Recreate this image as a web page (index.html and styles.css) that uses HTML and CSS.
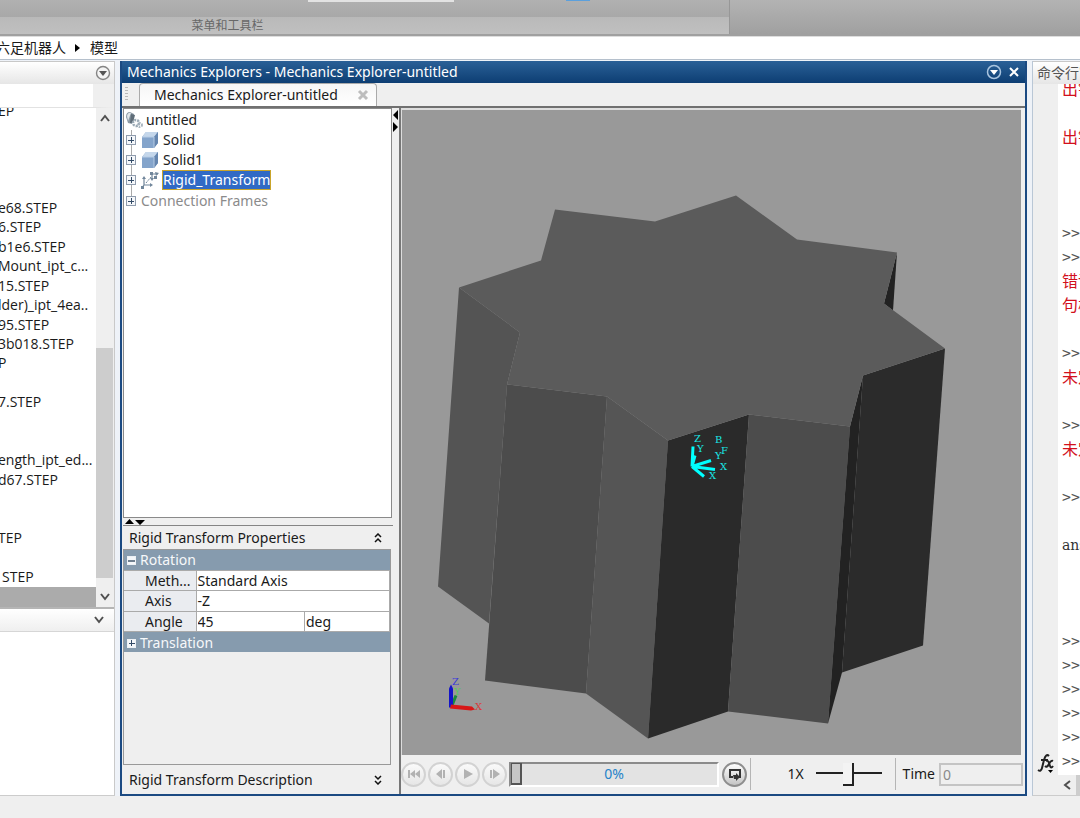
FILE: index.html
```html
<!DOCTYPE html>
<html lang="zh-CN">
<head>
<meta charset="utf-8">
<title>Mechanics Explorers</title>
<link rel="stylesheet" href="styles.css">
</head>
<body>
<div class="app">
  <header class="ribbon">
    <div class="ribbon-group">
      <div class="ribbon-tools"><span class="tool-edge"></span><span class="tool-mark"></span></div>
      <div class="ribbon-label">菜单和工具栏</div>
    </div>
    <div class="ribbon-rest"></div>
  </header>
  <nav class="address">
    <span>六足机器人</span>
    <svg class="crumb" viewBox="0 0 6 10"><path d="M0 1L5 5L0 9Z"/></svg>
    <span>模型</span>
  </nav>

  <div class="workspace">
    <aside class="files">
      <div class="pane-head">
        <button class="round-menu" aria-label="Panel menu"><svg viewBox="0 0 16 16"><circle cx="8" cy="8" r="6.5" fill="#f4f4f4" stroke="#858585" stroke-width="1.4"/><path d="M4 6H12L8 11Z" fill="#555"/></svg></button>
      </div>
      <div class="files-column"></div>
      <div class="files-body">
        <div class="files-clip">
          <ul class="file-list">
            <li>EP</li><li></li><li></li><li></li><li></li>
            <li>e68.STEP</li><li>6.STEP</li><li>b1e6.STEP</li><li>Mount_ipt_c...</li><li>15.STEP</li><li>lder)_ipt_4ea..</li><li>95.STEP</li><li>3b018.STEP</li><li>P</li><li></li><li>7.STEP</li><li></li><li></li><li>ength_ipt_ed...</li><li>d67.STEP</li><li></li><li></li><li>TEP</li><li></li><li class="inset">STEP</li><li class="selected"></li>
          </ul>
        </div>
        <div class="vscroll">
          <button class="arrow" aria-label="Scroll up"><svg viewBox="0 0 10 8"><path d="M1 7L5 2L9 7"/></svg></button>
          <div class="track"><div class="thumb"></div></div>
          <button class="arrow" aria-label="Scroll down"><svg viewBox="0 0 10 8"><path d="M1 1L5 6L9 1"/></svg></button>
        </div>
      </div>
      <div class="detail-head"><button class="arrow" aria-label="Expand details"><svg viewBox="0 0 10 8"><path d="M1 1L5 6L9 1"/></svg></button></div>
      <div class="detail-body"></div>
    </aside>

    <main class="explorer">
      <div class="titlebar">
        <h1>Mechanics Explorers - Mechanics Explorer-untitled</h1>
        <button class="round-menu" aria-label="Window menu"><svg viewBox="0 0 16 16"><circle cx="8" cy="8" r="6.5" fill="none" stroke="#a9c4df" stroke-width="1.500"/><path d="M4 6H12L8 11Z" fill="#fff"/></svg></button>
        <button class="close" aria-label="Close"><svg viewBox="0 0 10 10"><path d="M1 1L9 9M9 1L1 9"/></svg></button>
      </div>
      <div class="tabs">
        <span class="grip"></span>
        <div class="tab"><span>Mechanics Explorer-untitled</span><button class="tab-close" aria-label="Close tab"><svg viewBox="0 0 12 12"><path d="M2 2L10 10M10 2L2 10"/></svg></button></div>
      </div>
      <div class="content">
        <section class="side">
          <ul class="tree">
            <li class="root"><svg class="root-icon" viewBox="0 0 18 18"><path d="M1 6Q1 1 5 1L9 3L7 13L3 12Z" fill="#8b99a5"/><path d="M2 5Q3 1 6 2L3 10Z" fill="#e1e7eb"/><path d="M6 3L10 4L8 12L5 12Z" fill="#5f6d78"/><circle cx="11" cy="12" r="3" fill="none" stroke="#9aa9b5" stroke-width="2.500" stroke-dasharray="2 1"/><circle cx="15" cy="14" r="2" fill="none" stroke="#aab6c0" stroke-width="2" stroke-dasharray="1.500 1"/></svg><span>untitled</span></li>
            <li><i class="box"></i><svg class="node" viewBox="0 0 18 18"><path d="M1 6L5 1H17V12L13 17H1Z" fill="#84a4cb"/><path d="M1 6L5 1H17L13 6Z" fill="#c5d7eb"/><path d="M13 6L17 1V12L13 17Z" fill="#6686af"/><path d="M1 6H13V17" fill="none" stroke="#b7cce5"/></svg><span>Solid</span></li>
            <li><i class="box"></i><svg class="node" viewBox="0 0 18 18"><path d="M1 6L5 1H17V12L13 17H1Z" fill="#84a4cb"/><path d="M1 6L5 1H17L13 6Z" fill="#c5d7eb"/><path d="M13 6L17 1V12L13 17Z" fill="#6686af"/><path d="M1 6H13V17" fill="none" stroke="#b7cce5"/></svg><span>Solid1</span></li>
            <li><i class="box"></i><svg class="node" viewBox="0 0 18 18"><path d="M3 7V14H10M3 14L1 17M11 3V8M11 3H17" fill="none" stroke="#71869b" stroke-width="1.200"/><path d="M1 8L3 5L5 8ZM9 12L12 14L9 16ZM0 15H3V18H0ZM9 1H12V4H9ZM14 1L18 2L15 5ZM9 7H13L11 10ZM13 5H16V8H13Z" fill="#71869b"/><path d="M5 12L10 6" stroke="#71869b" stroke-dasharray="2 1"/></svg><span class="picked">Rigid_Transform</span></li>
            <li class="muted"><i class="box"></i><span>Connection Frames</span></li>
          </ul>
          <div class="hsplit"><svg viewBox="0 0 20 6"><path d="M0 5L4.500 0L9 5ZM10 1H20L15 6Z"/></svg></div>
          <div class="section-head"><h2>Rigid Transform Properties</h2><button aria-label="Collapse properties"><svg viewBox="0 0 8 10"><path d="M1 4L4 1L7 4M1 9L4 6L7 9"/></svg></button></div>
          <div class="props">
            <table>
              <colgroup><col class="c-name"><col class="c-value"><col class="c-unit"></colgroup>
              <tr class="group"><th colspan="3" scope="colgroup"><i class="box minus"></i>Rotation</th></tr>
              <tr><th scope="row">Meth...</th><td colspan="2">Standard Axis</td></tr>
              <tr><th scope="row">Axis</th><td colspan="2">-Z</td></tr>
              <tr><th scope="row">Angle</th><td><input type="text" value="45" aria-label="Angle"></td><td>deg</td></tr>
              <tr class="group"><th colspan="3" scope="colgroup"><i class="box"></i>Translation</th></tr>
            </table>
          </div>
          <div class="section-head last"><h2>Rigid Transform Description</h2><button aria-label="Expand description"><svg viewBox="0 0 8 10"><path d="M1 1L4 4L7 1M1 6L4 9L7 6"/></svg></button></div>
        </section>
        <div class="vsplit"><svg viewBox="0 0 5 22"><path d="M5 0V10L0 5ZM0 12V22L5 17Z"/></svg></div>
        <section class="viewer">
          <div class="stage">
          <svg class="scene" viewBox="402 111 619 644" role="img" aria-label="Star prism">
            <path fill="#222" d="M897 253L884 304L893 311Z"/>
            <path fill="#545454" d="M459 288L520 333L507 385L489 624L438 587Z"/>
            <path fill="#4c4c4c" d="M507 385L607 397L586 694L485 681Z"/>
            <path fill="#555" d="M607 397L668 441L648 739L586 694Z"/>
            <path fill="#2a2a2a" d="M668 441L749 415L728 712L648 739Z"/>
            <path fill="#4c4c4c" d="M749 415L850 427L828 724L728 712Z"/>
            <path fill="#222" d="M850 427L863 376L842 673L828 724Z"/>
            <path fill="#2b2b2b" d="M863 376L945 349L923 646L842 673Z"/>
            <path fill="#5b5b5b" d="M555 210L655 222L736 196L797 240L897 253L884 304L945 349L863 376L850 427L749 415L668 441L607 397L507 385L520 333L459 288L541 261Z"/>
            <path d="M692 467L693 447M692 467L695 456M692 467L711 461M692 467L715 470M692 467L704 477" fill="none" stroke="#0ff" stroke-width="3"/>
            <g class="axis-text" fill="#19e6e6">
              <text x="694" y="442">Z</text><text x="697" y="452">Y</text><text x="715" y="443">B</text><text x="721" y="454">F</text><text x="715" y="459">Y</text><text x="720" y="470">X</text><text x="709" y="479">X</text>
            </g>
            <path d="M452 706L456 696" stroke="#178a3c" stroke-width="3"/>
            <path d="M449 708V689L451 685L453 689V708Z" fill="#1414c8"/>
            <path d="M451 705L472 707L475 710L471 711L450 709Z" fill="#d81616"/>
            <g class="axis-text"><text x="452" y="685" fill="#3c3cd8">Z</text><text x="454" y="695" fill="#5cc85c">Y</text><text x="475" y="710" fill="#d83c3c">X</text></g>
          </svg>
          </div>
          <div class="player">
            <div class="transport">
              <button class="knob" aria-label="Rewind" disabled><svg viewBox="0 0 24 24"><path d="M6 8H8V16H6ZM13 8V16L8 12ZM18 8V16L13 12Z"/></svg></button>
              <button class="knob" aria-label="Step back" disabled><svg viewBox="0 0 24 24"><path d="M13 7V17L7 12ZM14 8H16V16H14Z"/></svg></button>
              <button class="knob" aria-label="Play" disabled><svg viewBox="0 0 24 24"><path d="M8 7V17L17 12Z"/></svg></button>
              <button class="knob" aria-label="Step forward" disabled><svg viewBox="0 0 24 24"><path d="M7 8H9V16H7ZM10 7V17L17 12Z"/></svg></button>
            </div>
            <div class="progress"><input type="range" min="0" max="100" value="0" aria-label="Progress"><output>0%</output></div>
            <button class="knob loop" aria-label="Loop"><svg viewBox="0 0 24 24"><path d="M10 15H7V8H17V15H15" fill="none" stroke="#333" stroke-width="2"/><path d="M10 13H13V11L17 15L13 19V17H11Z"/></svg></button>
            <div class="speed"><label for="speed">1X</label><input id="speed" type="range" min="0" max="100" value="50"></div>
            <div class="time"><label for="time">Time</label><input id="time" type="text" value="0" disabled></div>
          </div>
        </section>
      </div>
    </main>

    <aside class="command">
      <div class="pane-head">命令行窗口</div>
      <div class="console">
        <div class="gutter"><svg viewBox="0 0 18 20"><path d="M12 3Q9 0 7 7L5 15Q4 19 1 17M4 7H11" fill="none" stroke="#222" stroke-width="2"/><path d="M9 8Q11 7 12 10L13 13Q14 16 16 13M16 8Q14 7 12 11Q10 15 8 13" fill="none" stroke="#222" stroke-width="2"/><path d="M11 17H16L13.500 20Z"/></svg></div>
        <div class="lines">
          <p class="err">出错</p><p></p><p class="err">出错</p><p></p><p></p><p></p><p>&gt;&gt;</p><p>&gt;&gt;</p><p class="err">错误</p><p class="err">句柄</p><p></p><p>&gt;&gt;</p><p class="err">未定义</p><p></p><p>&gt;&gt;</p><p class="err">未定义</p><p></p><p>&gt;&gt;</p><p></p><p class="ans">ans =</p><p></p><p></p><p></p><p>&gt;&gt;</p><p>&gt;&gt;</p><p>&gt;&gt;</p><p>&gt;&gt;</p><p>&gt;&gt;</p><p>&gt;&gt;</p>
        </div>
      </div>
      <div class="hscroll"><button class="arrow" aria-label="Scroll left"><svg viewBox="0 0 8 10"><path d="M7 1L2 5L7 9"/></svg></button><div class="hthumb"></div></div>
    </aside>
  </div>
  <footer class="status"></footer>
</div>
</body>
</html>
```
FILE: styles.css
```css
* { box-sizing: border-box; }
body { margin: 0; background: #efefef; color: #1a1a1a; font: 14px/20px "Noto Sans", "Noto Sans CJK SC", sans-serif; }
h1, h2, p, ul { margin: 0; padding: 0; font-size: inherit; font-weight: 400; list-style: none; }
button { display: flex; flex: none; align-items: center; justify-content: center; padding: 0; border: 0; background: none; }
svg { display: block; flex: none; }
.app { display: flex; flex-direction: column; height: 100vh; overflow: hidden; }

.ribbon { display: flex; flex: none; height: 36px; border-bottom: 2px solid #a0a0a0; }
.ribbon-group { display: flex; flex: 0 0 730px; flex-direction: column; border-right: 1px solid #979797; }
.ribbon-tools { display: flex; height: 17px; padding-left: 308px; gap: 112px; background: linear-gradient(#b1b1b1, #a8a8a8); }
.tool-edge { width: 146px; height: 2px; background: #e3e3e3; }
.tool-mark { width: 24px; height: 1px; background: #5ca0dc; }
.ribbon-label { flex: 1; padding-right: 274px; background: linear-gradient(#b9b9b9, #c0c0c0); color: #686868; font-size: 12px; line-height: 17px; text-align: center; }
.ribbon-rest { flex: 1; background: linear-gradient(#b3b3b3, #a0a0a0); }
.address { display: flex; flex: none; align-items: center; gap: 9px; height: 24px; border-top: 1px solid #ddd; border-bottom: 1px solid #b5c0cc; background: #fff; white-space: nowrap; }
.address span:first-child { margin-left: -4px; }
.crumb { width: 6px; height: 10px; }

.workspace { display: flex; flex: 1; gap: 5px; min-height: 0; padding-top: 1px; background: #eef2f8; }
.pane-head { display: flex; flex: none; align-items: center; height: 23px; border-top: 1px solid #c8c8c8; background: linear-gradient(#fff, #e6e6e6); }
.round-menu svg { width: 16px; height: 16px; }
.arrow svg { width: 10px; height: 8px; }
.arrow path { fill: none; stroke: #505050; stroke-width: 2; }

.files { display: flex; flex: 0 0 115px; flex-direction: column; min-width: 0; border-right: 1px solid #c9c9c9; border-bottom: 1px solid #ccc; background: #fff; }
.files .pane-head { justify-content: flex-end; padding-right: 3px; }
.files-column { flex: none; height: 24px; border-right: 21px solid #efefef; border-bottom: 1px solid #e2e2e2; }
.files-body { display: flex; flex: 498 1 0; min-height: 0; }
.files-clip { flex: 1; min-width: 0; overflow: hidden; }
.file-list { display: grid; grid-template-rows: repeat(26, 1fr); height: calc(100% + 6px); margin-top: -6px; font: 14px/18px "Open Sans", sans-serif; white-space: nowrap; }
.file-list li { min-height: 0; text-indent: -2px; }
.file-list .inset { text-indent: 2px; }
.file-list .selected { background: #ababab; }
.vscroll { display: flex; flex: 0 0 18px; flex-direction: column; background: #efefef; }
.vscroll .arrow { height: 20px; }
.track { display: flex; flex: 1; align-items: flex-end; padding-bottom: 9px; }
.thumb { width: 17px; height: 51%; background: #cdcdcd; }
.detail-head { display: flex; flex: none; align-items: center; justify-content: flex-end; height: 25px; padding-right: 10px; border-top: 2px solid #b5b5b5; border-bottom: 1px solid #d6d6d6; background: linear-gradient(#fff, #efefef); }
.detail-body { flex: 163 1 0; }

.explorer { display: flex; flex: 1; flex-direction: column; min-width: 0; border: 2px solid #1b4a82; border-top: 0; background: #efefef; }
.titlebar { display: flex; flex: none; align-items: center; gap: 7px; height: 22px; padding: 0 5px; background: linear-gradient(#2a6097, #0d3e73); color: #fff; white-space: nowrap; }
.titlebar h1 { flex: 1; overflow: hidden; line-height: 22px; }
.close svg { width: 10px; height: 10px; }
.close path { stroke: #fff; stroke-width: 2; }
.close { margin-right: 1px; }
.tabs { display: flex; flex: none; height: 25px; border-bottom: 2px solid #707070; background: #efefef; }
.grip { width: 3px; height: 15px; margin: 4px 11px 0 3px; background: repeating-linear-gradient(#b8b8b8 0 1px, #efefef 1px 3px); }
.tab { display: flex; align-items: center; gap: 19px; padding: 0 7px 0 14px; border: 1px solid #aaa; border-bottom: 0; border-radius: 4px 4px 0 0; background: linear-gradient(#f6f6f6, #fff); white-space: nowrap; }
.tab-close svg { width: 12px; height: 12px; }
.tab-close path { stroke: #bdbdbd; stroke-width: 3; }
.content { display: flex; flex: 1; min-height: 0; padding-left: 1px; }

.side { display: flex; flex: 0 0 270px; flex-direction: column; min-width: 0; }
.tree { flex: 1; margin-right: 1px; border: 1px solid #8a8a8a; background: #fff; color: #202020; line-height: 20px; white-space: nowrap; }
.tree li { display: flex; align-items: center; height: 20px; padding-left: 2px; }
.tree li + li { background: linear-gradient(#aaa, #aaa) 7px 0 / 1px 100% no-repeat; }
.tree .muted { height: 22px; background-size: 1px 11px; color: #8b8b8b; }
.tree .root { height: 21px; padding-left: 1px; gap: 3px; }
.root-icon, .node { width: 18px; height: 18px; }
.node { margin: 0 4px 0 5px; }
.muted .box { margin-right: 5px; }
.picked { padding: 0 1px; margin-left: -1px; outline: 1px solid #c9a52b; outline-offset: -1px; background: #316ac5; color: #fff; }
.box { display: inline-block; flex: none; width: 10px; height: 10px; border: 1px solid #8f9cad; background: linear-gradient(#344c68, #344c68) center / 6px 1px no-repeat, linear-gradient(#344c68, #344c68) center / 1px 6px no-repeat, #f5f7fa; }
.hsplit { flex: none; height: 8px; padding-left: 2px; border-bottom: 1px solid #858585; }
.hsplit svg { width: 20px; height: 6px; margin-top: 1px; }
.section-head { display: flex; flex: none; align-items: center; justify-content: space-between; height: 23px; padding: 0 11px 0 6px; white-space: nowrap; }
.section-head.last { height: 29px; }
.section-head svg { width: 8px; height: 10px; }
.section-head path { fill: none; stroke: #111; stroke-width: 1.5; }
.props { flex: none; height: 216px; margin-right: 2px; border: 1px solid #999; }
.props table { width: 100%; height: 102px; border-collapse: collapse; table-layout: fixed; }
.c-name { width: 72px; }
.c-unit { width: 85px; }
.props th, .props td { height: 20px; padding: 0 0 0 1px; border: 1px solid #aaa; border-left: 0; background: #fff; font-weight: 400; line-height: 19px; text-align: left; }
.props tr th { padding-left: 21px; background: #eaecf0; }
.props .group th { padding-left: 3px; border: 0; background: #869bae; color: #f6f8fa; }
.group .box { width: 9px; height: 9px; margin-right: 4px; border-color: #edf1f5; }
.group .minus { background: linear-gradient(#708090, #708090) center / 7px 2px no-repeat, #f5f7fa; }
.props input { display: block; width: 100%; height: 19px; padding: 0; border: 0; font: inherit; color: inherit; }
.vsplit { flex: 0 0 8px; padding-top: 2px; border-right: 2px solid #777; }
.vsplit svg { width: 5px; height: 22px; }

.viewer { display: flex; flex: 1; flex-direction: column; min-width: 0; }
.stage { flex: 1; min-height: 0; margin-right: 4px; border-top: 2px solid #ddd; border-left: 1px solid #ddd; background: #999; }
.scene { width: 100%; height: 100%; }
.axis-text { font: 10px "DejaVu Serif", serif; }
.player { display: flex; flex: none; align-items: center; height: 39px; padding-bottom: 1px; }
.transport { display: flex; gap: 2px; }
.knob { width: 25px; height: 25px; border: 2px solid #d2d2d2; border-radius: 50%; background: linear-gradient(#fafafa, #e6e6e6); }
.knob svg { width: 24px; height: 24px; fill: #b2b2b2; }
.knob.loop { border-color: #8e8e8e; background: linear-gradient(#fff, #c4c4c4); }
.knob.loop svg { fill: #333; }
.progress { display: grid; flex: 1; height: 25px; margin: 0 3px 0 2px; border: 2px solid #8b8b8b; border-right-color: #fff; border-bottom-color: #fff; background: #e3e3e3; }
.progress > * { grid-area: 1 / 1; }
.progress output { align-self: center; color: #2582c9; text-align: center; pointer-events: none; }
input[type="range"] { margin: 0; background: none; appearance: none; -webkit-appearance: none; }
.progress input { width: 100%; height: 21px; }
.progress input::-webkit-slider-thumb { width: 11px; height: 22px; border: 1px solid #555; border-width: 1px 2px 2px 1px; background: #c6c6c6; -webkit-appearance: none; }
.speed { display: flex; align-items: center; gap: 12px; height: 32px; margin-left: 3px; padding: 0 13px 0 36px; border-left: 1px solid #b5b5b5; border-right: 1px solid #b5b5b5; }
.speed input { width: 66px; height: 24px; background: linear-gradient(#222, #222) 0 10px / 100% 2px no-repeat; }
.speed input::-webkit-slider-thumb { width: 11px; height: 23px; border: solid #222; border-width: 0 2px 2px 0; background: #f3f3f3; -webkit-appearance: none; }
.time { display: flex; align-items: center; gap: 4px; padding: 0 2px 0 7px; }
.time input { width: 84px; height: 23px; padding: 0 2px; border: 2px solid #c4c4c4; background: #efefef; color: #8a8a8a; font: inherit; }

.command { display: flex; flex: 0 0 48px; flex-direction: column; min-width: 0; overflow: hidden; border-left: 1px solid #b9c7d6; border-bottom: 1px solid #ccc; background: #efefef; }
.command .pane-head { padding-left: 4px; color: #555; white-space: nowrap; }
.console { display: flex; flex: 1; min-height: 0; background: #fff; }
.gutter { display: flex; flex: 0 0 25px; align-items: flex-end; padding: 0 0 2px 4px; background: #efefef; }
.gutter svg { width: 18px; height: 20px; }
.lines { display: flex; flex: 1; flex-direction: column; justify-content: flex-end; min-width: 0; overflow: hidden; padding: 0 0 3px 4px; color: #555; font: 300 16px/24px "Noto Sans CJK SC", sans-serif; white-space: nowrap; }
.lines p { flex: none; height: 24px; }
.lines .err { color: #d2101c; }
.lines .ans { color: #333; font: 14px/26px "DejaVu Serif", serif; }
.hscroll { display: flex; flex: none; justify-content: space-between; height: 20px; padding-left: 30px; }
.hscroll .arrow svg { width: 8px; height: 10px; }
.hthumb { width: 4px; background: #cdcdcd; }
.status { flex: none; height: 22px; background: #efefef; }
```
